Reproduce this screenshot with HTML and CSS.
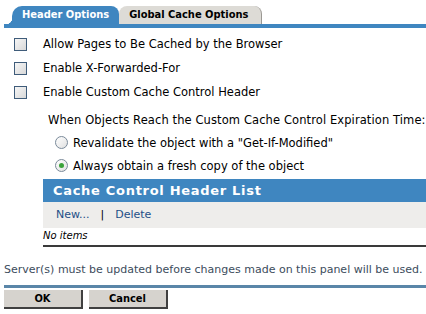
FILE: index.html
```html
<!DOCTYPE html>
<html lang="en">
<head>
    <meta charset="UTF-8">
    <title>Header Options</title>
<link rel="stylesheet" href="styles.css">
</head>
<body>
    <div class="tabs">
        <div class="tab active">Header Options</div>
        <div class="tab">Global Cache Options</div>
    </div>
    <div class="tab-bar"></div>

    <div class="options">
        <label class="check-row"><span class="box"></span>Allow Pages to Be Cached by the Browser</label>
        <label class="check-row"><span class="box"></span>Enable X-Forwarded-For</label>
        <label class="check-row"><span class="box"></span>Enable Custom Cache Control Header</label>
    </div>

    <div class="sub">
        <p class="sub-title">When Objects Reach the Custom Cache Control Expiration Time:</p>
        <label class="radio-row"><span class="radio"></span>Revalidate the object with a "Get-If-Modified"</label>
        <label class="radio-row"><span class="radio checked"></span>Always obtain a fresh copy of the object</label>

        <div class="list">
            <div class="list-head">Cache Control Header List</div>
            <div class="list-tools"><a>New...</a><span class="sep">|</span><a>Delete</a></div>
            <div class="list-empty">No items</div>
        </div>
    </div>

    <p class="note">Server(s) must be updated before changes made on this panel will be used.</p>
    <div class="footer">
        <button class="btn">OK</button>
        <button class="btn">Cancel</button>
    </div>
</body>
</html>
```

FILE: styles.css
```css
body {
    margin: 0;
    padding: 0;
    font-family: "DejaVu Sans", sans-serif;
    font-size: 11.5px;
    line-height: 14px;
    color: #000000;
    background: #ffffff;
    width: 426px;
    height: 314px;
    overflow: hidden;
}

.tabs {
    display: flex;
    padding: 6px 0 0 12px;
    height: 18px;
}

.tab {
    position: relative;
    font-family: "DejaVu Sans Condensed", "DejaVu Sans", sans-serif;
    font-weight: bold;
    font-size: 11px;
    line-height: 18px;
    padding: 0 13px 0 10px;
    background: #dddbd6;
    color: #000000;
    border-radius: 8px 8px 0 0;
    border-right: 1px solid #9a9893;
}

.tab.active {
    background: #3f86c0;
    color: #ffffff;
    padding: 0 10px 0 10px;
    border-right: none;
    border-radius: 10px 8px 0 0;
}

/* flared foot of the selected tab */
.tab.active::before {
    content: "";
    position: absolute;
    left: -6px;
    bottom: 0;
    width: 8px;
    height: 6px;
    background: radial-gradient(circle at 0 0, transparent 6px, #3f86c0 6.5px);
}

.tab-bar {
    height: 4px;
    margin-left: 4px;
    background: #3f86c0;
}

.options {
    padding: 4px 0 0 14px;
}

.check-row {
    display: flex;
    align-items: center;
    height: 24px;
}

.box {
    width: 11px;
    height: 11px;
    border: 1px solid #3f5c7a;
    background: linear-gradient(135deg, #f6f6f6, #d8d8d8);
    margin-right: 16px;
}

.sub {
    padding-left: 48px;
}

.sub-title {
    margin: 9px 0 4px 0;
    letter-spacing: 0.1px;
    white-space: nowrap;
}

.radio-row {
    display: flex;
    align-items: center;
    height: 23px;
    margin-left: 7px;
}

.radio {
    width: 11px;
    height: 11px;
    border: 1px solid #7a8a9a;
    border-radius: 50%;
    background: linear-gradient(135deg, #ffffff, #e0e0e0);
    margin-right: 5px;
    display: flex;
    align-items: center;
    justify-content: center;
}

.radio.checked::after {
    content: "";
    width: 5px;
    height: 5px;
    border-radius: 50%;
    background: #3aa23a;
}

.list {
    margin: 2px 0 0 -5px;
}

.list-head {
    background: #3f86c0;
    color: #ffffff;
    font-weight: bold;
    font-size: 13px;
    letter-spacing: 0.7px;
    height: 23px;
    line-height: 23px;
    padding-left: 10px;
}

.list-tools {
    background: #eeedeb;
    height: 26px;
    line-height: 26px;
    padding-left: 13px;
    font-size: 11px;
    color: #1e4f87;
}

.sep {
    color: #000000;
    margin: 0 11px;
}

.list-empty {
    font-style: italic;
    font-size: 10px;
    height: 17px;
    line-height: 16px;
    border-bottom: 2px solid #3a3a3a;
}

.note {
    margin: 16px 0 0 4px;
    color: #3c4c5c;
    font-size: 11px;
    white-space: nowrap;
}

.footer {
    margin: 8px 0 0 4px;
    border-top: 3px solid #5a86a8;
    padding-top: 2px;
    display: flex;
    gap: 6px;
}

.btn {
    width: 79px;
    height: 19px;
    font-family: "DejaVu Sans Condensed", "DejaVu Sans", sans-serif;
    font-weight: bold;
    font-size: 11px;
    color: #000000;
    background: #d6d3ce;
    border: none;
    border-right: 2px solid #404040;
    border-bottom: 2px solid #404040;
    padding: 0;
}
```
